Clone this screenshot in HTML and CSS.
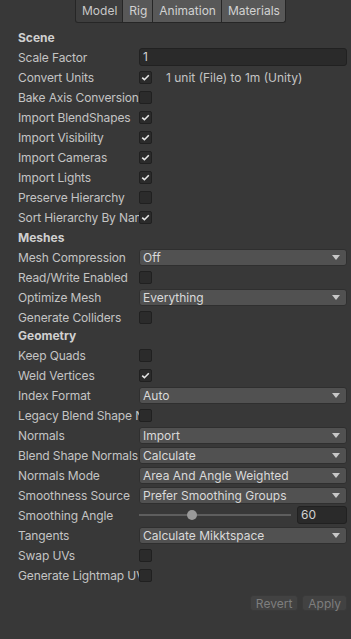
FILE: index.html
```html
<!DOCTYPE html>
<html lang="en">
<head>
    <meta charset="UTF-8">
    <meta name="viewport" content="width=device-width, initial-scale=1.0">
    <title>Model Import Settings</title>
    <link rel="stylesheet" href="styles.css">
</head>
<body>
    <!-- Tab strip -->
    <div class="tabs">
        <span class="tab active">Model</span>
        <span class="tab">Rig</span>
        <span class="tab">Animation</span>
        <span class="tab">Materials</span>
    </div>

    <div class="inspector">
        <!-- Scene -->
        <div class="header">Scene</div>
        <div class="row"><span class="label">Scale Factor</span><span class="text-field">1</span></div>
        <div class="row"><span class="label">Convert Units</span>
            <span class="inline"><span class="toggle on"><svg width="9" height="9" viewBox="0 0 9 9"><path d="M1.2 4.6 L3.4 6.7 L7.8 2.2" fill="none" stroke="#e6e6e6" stroke-width="1.6"/></svg></span><span class="note">1 unit (File) to 1m (Unity)</span></span>
        </div>
        <div class="row"><span class="label">Bake Axis Conversion</span><span class="toggle"></span></div>
        <div class="row"><span class="label">Import BlendShapes</span><span class="toggle on"><svg width="9" height="9" viewBox="0 0 9 9"><path d="M1.2 4.6 L3.4 6.7 L7.8 2.2" fill="none" stroke="#e6e6e6" stroke-width="1.6"/></svg></span></div>
        <div class="row"><span class="label">Import Visibility</span><span class="toggle on"><svg width="9" height="9" viewBox="0 0 9 9"><path d="M1.2 4.6 L3.4 6.7 L7.8 2.2" fill="none" stroke="#e6e6e6" stroke-width="1.6"/></svg></span></div>
        <div class="row"><span class="label">Import Cameras</span><span class="toggle on"><svg width="9" height="9" viewBox="0 0 9 9"><path d="M1.2 4.6 L3.4 6.7 L7.8 2.2" fill="none" stroke="#e6e6e6" stroke-width="1.6"/></svg></span></div>
        <div class="row"><span class="label">Import Lights</span><span class="toggle on"><svg width="9" height="9" viewBox="0 0 9 9"><path d="M1.2 4.6 L3.4 6.7 L7.8 2.2" fill="none" stroke="#e6e6e6" stroke-width="1.6"/></svg></span></div>
        <div class="row"><span class="label">Preserve Hierarchy</span><span class="toggle"></span></div>
        <div class="row"><span class="label">Sort Hierarchy By Name</span><span class="toggle on"><svg width="9" height="9" viewBox="0 0 9 9"><path d="M1.2 4.6 L3.4 6.7 L7.8 2.2" fill="none" stroke="#e6e6e6" stroke-width="1.6"/></svg></span></div>

        <!-- Meshes -->
        <div class="header">Meshes</div>
        <div class="row"><span class="label">Mesh Compression</span><span class="dropdown">Off<i class="arrow"></i></span></div>
        <div class="row"><span class="label">Read/Write Enabled</span><span class="toggle"></span></div>
        <div class="row"><span class="label">Optimize Mesh</span><span class="dropdown">Everything<i class="arrow"></i></span></div>
        <div class="row"><span class="label">Generate Colliders</span><span class="toggle"></span></div>

        <!-- Geometry -->
        <div class="header short">Geometry</div>
        <div class="row"><span class="label">Keep Quads</span><span class="toggle"></span></div>
        <div class="row"><span class="label">Weld Vertices</span><span class="toggle on"><svg width="9" height="9" viewBox="0 0 9 9"><path d="M1.2 4.6 L3.4 6.7 L7.8 2.2" fill="none" stroke="#e6e6e6" stroke-width="1.6"/></svg></span></div>
        <div class="row"><span class="label">Index Format</span><span class="dropdown">Auto<i class="arrow"></i></span></div>
        <div class="row"><span class="label">Legacy Blend Shape Normals</span><span class="toggle"></span></div>
        <div class="row"><span class="label">Normals</span><span class="dropdown">Import<i class="arrow"></i></span></div>
        <div class="row"><span class="label">Blend Shape Normals</span><span class="dropdown">Calculate<i class="arrow"></i></span></div>
        <div class="row"><span class="label">Normals Mode</span><span class="dropdown">Area And Angle Weighted<i class="arrow"></i></span></div>
        <div class="row"><span class="label">Smoothness Source</span><span class="dropdown">Prefer Smoothing Groups<i class="arrow"></i></span></div>
        <div class="row"><span class="label">Smoothing Angle</span>
            <span class="slider"><span class="track"><span class="thumb"></span></span><span class="text-field num">60</span></span>
        </div>
        <div class="row"><span class="label">Tangents</span><span class="dropdown">Calculate Mikktspace<i class="arrow"></i></span></div>
        <div class="row"><span class="label">Swap UVs</span><span class="toggle"></span></div>
        <div class="row"><span class="label">Generate Lightmap UVs</span><span class="toggle"></span></div>

        <!-- Footer buttons -->
        <div class="buttons">
            <button class="btn">Revert</button>
            <button class="btn">Apply</button>
        </div>
    </div>
</body>
</html>
```

FILE: styles.css
```css
/* General */
body {
    margin: 0;
    background: #383838;
    font-family: "Inter", "Noto Sans", sans-serif;
    font-size: 12px;
    color: #c4c4c4;
}

/* Tabs */
.tabs {
    display: flex;
    height: 23px;
    padding-left: 75px;
}

.tab {
    padding: 0 5px 0 6px;
    line-height: 22px;
    background: #585858;
    color: #d2d2d2;
    border: 1px solid #262626;
    border-top: none;
    border-left: none;
}

.tab:first-child {
    border-left: 1px solid #262626;
    border-radius: 0 0 0 3px;
}

.tab:last-child {
    border-radius: 0 0 3px 0;
}

.tab.active {
    background: #3e3e3e;
    color: #c8c8c8;
}

/* Inspector rows */
.inspector {
    padding: 4px 4px 0 18px;
}

.header {
    height: 20px;
    line-height: 21px;
    font-weight: bold;
    color: #d0d0d0;
}

.header.short {
    height: 18px;
    line-height: 18px;
}

.row {
    display: grid;
    grid-template-columns: 121px 1fr;
    height: 20px;
    align-items: center;
}

.label {
    white-space: nowrap;
    overflow: hidden;
    min-width: 0;
    letter-spacing: -0.12px;
}

/* Fields */
.text-field {
    box-sizing: border-box;
    height: 18px;
    line-height: 16px;
    padding-left: 3px;
    background: #2a2a2a;
    border: 1px solid #212121;
    border-radius: 3px;
    color: #d2d2d2;
}

.dropdown {
    box-sizing: border-box;
    height: 17px;
    display: flex;
    align-items: center;
    justify-content: space-between;
    padding: 0 6px 0 3px;
    background: #515151;
    border: 1px solid #2f2f2f;
    border-radius: 3px;
    color: #dadada;
}

.arrow {
    width: 0;
    height: 0;
    border-left: 4px solid transparent;
    border-right: 4px solid transparent;
    border-top: 5px solid #c8c8c8;
}

.toggle {
    box-sizing: border-box;
    width: 13px;
    height: 13px;
    display: flex;
    align-items: center;
    justify-content: center;
    background: #2b2b2b;
    border: 1px solid #202020;
    border-radius: 2px;
}

.inline {
    display: flex;
    align-items: center;
    gap: 14px;
}

.note {
    color: #c4c4c4;
}

/* Slider */
.slider {
    display: flex;
    align-items: center;
    gap: 6px;
}

.track {
    flex: 1;
    height: 2px;
    background: #5e5e5e;
    position: relative;
}

.thumb {
    position: absolute;
    left: 48px;
    top: -4px;
    width: 10px;
    height: 10px;
    border-radius: 50%;
    background: #999999;
}

.num {
    width: 50px;
}

/* Buttons */
.buttons {
    display: flex;
    justify-content: flex-end;
    gap: 4px;
    margin-top: 10px;
}

.btn {
    height: 16px;
    padding: 0 5px;
    font-family: inherit;
    font-size: 12px;
    color: #7e7e7e;
    background: #424242;
    border: 1px solid #3a3a3a;
    border-radius: 3px;
}
```
